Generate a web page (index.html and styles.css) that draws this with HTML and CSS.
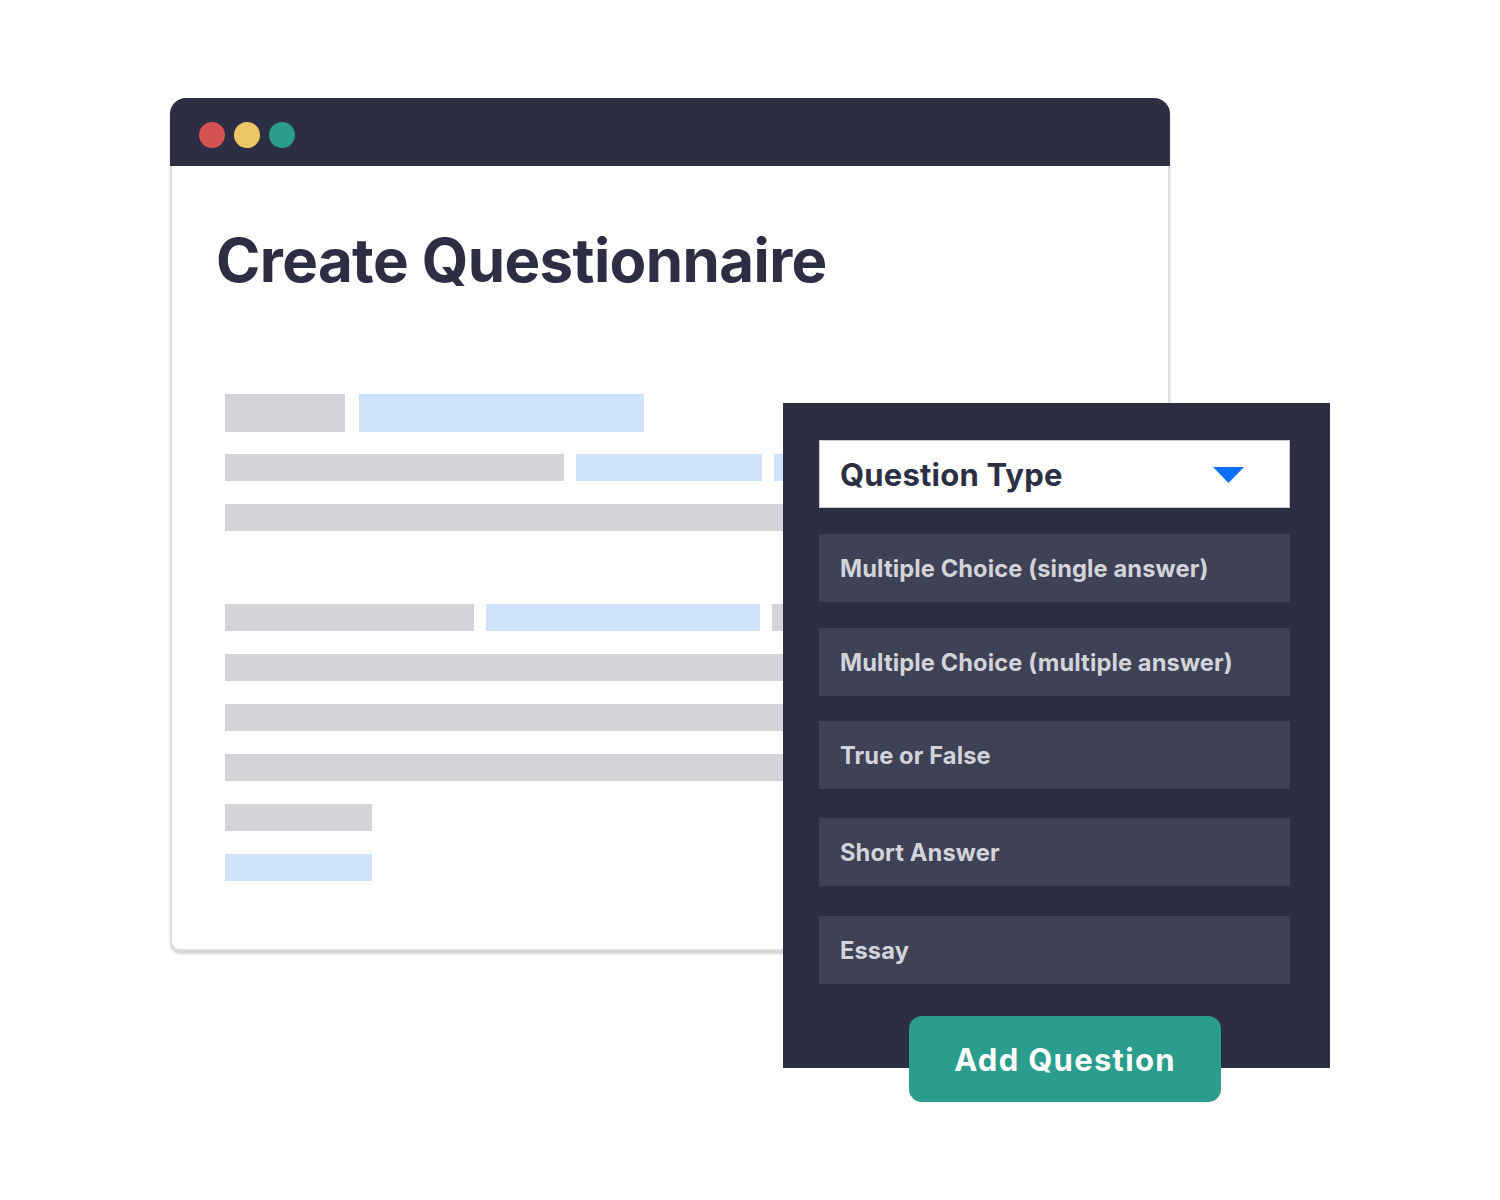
FILE: index.html
```html
<!DOCTYPE html>
<html>
<head>
<meta charset="utf-8">
<link rel="stylesheet" href="styles.css">
</head>
<body>
<div class="stage">
  <div class="window">
    <div class="titlebar">
      <span class="dot red"></span>
      <span class="dot yellow"></span>
      <span class="dot green"></span>
    </div>
    <div class="content">
      <h1 class="title">Create Questionnaire</h1>
      <div class="lines">
        <div class="row tall"><span class="bar gray w120"></span><span class="bar blue w285"></span></div>
        <div class="row"><span class="bar gray w339"></span><span class="bar blue w186"></span><span class="bar blue grow"></span></div>
        <div class="row"><span class="bar gray grow"></span></div>
        <div class="row sep"><span class="bar gray w249"></span><span class="bar blue w274"></span><span class="bar gray grow"></span></div>
        <div class="row"><span class="bar gray grow"></span></div>
        <div class="row"><span class="bar gray grow"></span></div>
        <div class="row"><span class="bar gray grow"></span></div>
        <div class="row"><span class="bar gray w147"></span></div>
        <div class="row"><span class="bar blue w147"></span></div>
      </div>
    </div>
  </div>

  <div class="panel">
    <div class="select">
      <span class="select-label">Question Type</span>
      <svg class="caret" width="31" height="16" viewBox="0 0 31 16"><polygon points="0,0 31,0 15.5,16" fill="#0d6efd"/></svg>
    </div>
    <ul class="options">
      <li class="option">Multiple Choice (single answer)</li>
      <li class="option">Multiple Choice (multiple answer)</li>
      <li class="option">True or False</li>
      <li class="option">Short Answer</li>
      <li class="option">Essay</li>
    </ul>
    <button class="add-btn">Add Question</button>
  </div>
</div>
</body>
</html>
```

FILE: styles.css
```css
* { box-sizing: border-box; }
html, body { margin: 0; padding: 0; background: #ffffff; }
body { font-family: Inter, "Noto Sans", sans-serif; }

.stage {
  position: relative;
  width: 1500px;
  height: 1200px;
  padding: 98px 0 0 170px;
}

.window {
  width: 1000px;
  height: 853px;
  border-radius: 16px 16px 10px 10px;
  background: #ffffff;
  border: 2px solid #dcdce2;
  border-top: none;
  box-shadow: 0 3px 3px rgba(0,0,0,0.18);
  display: flex;
  flex-direction: column;
}

.titlebar {
  height: 68px;
  flex-shrink: 0;
  background: #2c2e43;
  border-radius: 16px 16px 0 0;
  display: flex;
  align-items: center;
  gap: 9px;
  padding: 6px 0 0 29px;
  margin: 0 -2px;
}

.dot {
  width: 26px;
  height: 26px;
  border-radius: 50%;
  display: block;
}
.red { background: #d55252; }
.yellow { background: #ebc665; }
.green { background: #2a9d8c; }

.content {
  padding: 0 0 0 44px;
  overflow: hidden;
}

.title {
  margin: 56px 0 0 0;
  font-size: 60px;
  font-weight: 700;
  line-height: 76px;
  color: #2c2e43;
  letter-spacing: -0.6px;
}

.lines {
  margin-top: 96px;
  padding-left: 9px;
  display: flex;
  flex-direction: column;
  gap: 23px;
}

.row {
  display: flex;
  gap: 12px;
  height: 27px;
}
.row.tall { height: 38px; gap: 14px; margin-bottom: -1px; }
.row.sep { margin-top: 50px; }

.bar { display: block; height: 100%; }
.gray { background: #d4d3d8; }
.blue { background: #cee2fc; }
.w120 { width: 120px; }
.w285 { width: 285px; }
.w339 { width: 339px; }
.w186 { width: 186px; }
.w249 { width: 249px; }
.w274 { width: 274px; }
.w147 { width: 147px; }
.grow { flex: 1; }

.panel {
  position: absolute;
  left: 783px;
  top: 403px;
  width: 547px;
  height: 665px;
  background: #2c2e43;
  padding: 37px 40px 0 36px;
  display: flex;
  flex-direction: column;
}

.select {
  height: 68px;
  flex-shrink: 0;
  background: #ffffff;
  display: flex;
  align-items: center;
  justify-content: space-between;
  padding: 0 45px 0 20px;
  border: 1px solid #c8c8d0;
}

.select-label {
  font-size: 31px;
  font-weight: 700;
  color: #2c2e43;
  letter-spacing: 0.2px;
}

.caret { display: block; margin-top: 2px; }

.options {
  list-style: none;
  margin: 26px 0 0 0;
  padding: 0;
  display: flex;
  flex-direction: column;
  gap: 26px;
  flex-shrink: 0;
}

.option {
  height: 68px;
  flex-shrink: 0;
  background: #3f4155;
  color: #d3d3da;
  font-size: 23.7px;
  font-weight: 700;
  display: flex;
  align-items: center;
  padding-left: 21px;
  letter-spacing: 0.1px;
}
.option:nth-child(3) { margin-top: -1px; }
.option:nth-child(4) { margin-top: 3px; }
.option:nth-child(5) { margin-top: 4px; }

.add-btn {
  align-self: flex-start;
  flex-shrink: 0;
  margin: 32px 0 0 90px;
  width: 312px;
  height: 86px;
  border: none;
  border-radius: 13px;
  background: #2a9d8c;
  color: #ffffff;
  font-family: Inter, "Noto Sans", sans-serif;
  font-size: 31px;
  font-weight: 700;
  letter-spacing: 1.3px;
  padding: 0;
}
```
